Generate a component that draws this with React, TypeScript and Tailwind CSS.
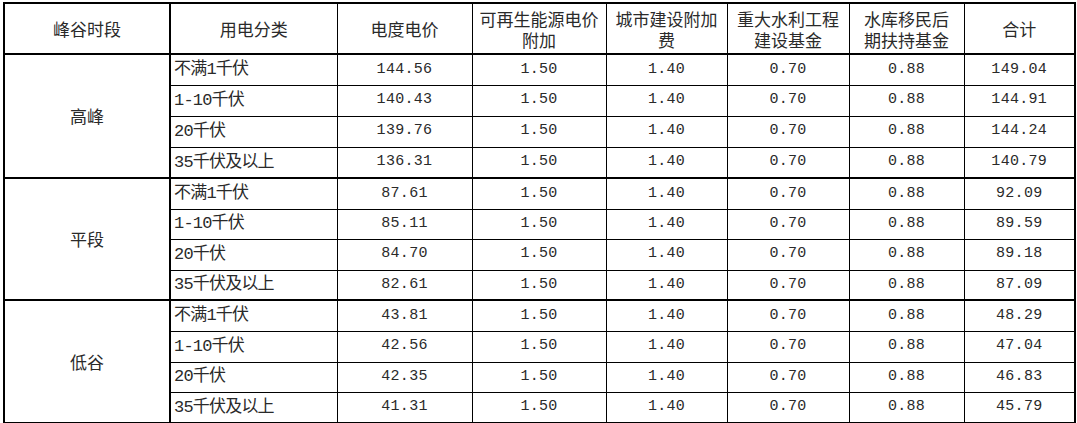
import React from "react";

// 峰谷分时电价表
const sections = [
  {
    period: "高峰",
    rows: [
      ["不满1千伏", "144.56", "149.04"],
      ["1-10千伏", "140.43", "144.91"],
      ["20千伏", "139.76", "144.24"],
      ["35千伏及以上", "136.31", "140.79"],
    ],
  },
  {
    period: "平段",
    rows: [
      ["不满1千伏", "87.61", "92.09"],
      ["1-10千伏", "85.11", "89.59"],
      ["20千伏", "84.70", "89.18"],
      ["35千伏及以上", "82.61", "87.09"],
    ],
  },
  {
    period: "低谷",
    rows: [
      ["不满1千伏", "43.81", "48.29"],
      ["1-10千伏", "42.56", "47.04"],
      ["20千伏", "42.35", "46.83"],
      ["35千伏及以上", "41.31", "45.79"],
    ],
  },
];

const rowHeights = [
  ["h-[31px]", "h-[31px]", "h-[31px]", "h-[31px]"],
  ["h-[31px]", "h-[30px]", "h-[31px]", "h-[30px]"],
  ["h-[31px]", "h-[31px]", "h-[30px]", "h-[31px]"],
];

// header lines, broken where the original breaks them
const headers: string[][] = [
  ["峰谷时段"],
  ["用电分类"],
  ["电度电价"],
  ["可再生能源电价", "附加"],
  ["城市建设附加", "费"],
  ["重大水利工程", "建设基金"],
  ["水库移民后", "期扶持基金"],
  ["合计"],
];

const cjk = "font-['Noto_Sans_CJK_SC',sans-serif] text-[17px]";
const num =
  "font-['Liberation_Mono','Noto_Sans_CJK_SC',monospace] text-[15px] tracking-[0.3px] text-center";

const App: React.FC = () => {
  return (
    <div className="w-[1077px] h-[423px] bg-white pt-[2px] pl-[3px] text-[#2a2a2a] overflow-hidden">
      <table className="table-fixed border-collapse border-2 border-black w-[1071px]">
        <colgroup>
          <col className="w-[166px]" />
          <col className="w-[167px]" />
          <col className="w-[135px]" />
          <col className="w-[134px]" />
          <col className="w-[121px]" />
          <col className="w-[122px]" />
          <col className="w-[115px]" />
          <col className="w-[111px]" />
        </colgroup>
        <thead>
          <tr className="h-[51px]">
            {headers.map((lines, i) => (
              <th
                key={lines.join("")}
                className={`${cjk} font-normal leading-[21px] text-center align-middle whitespace-nowrap px-0 border border-black border-b-2 ${
                  i === 0 ? "border-r-2" : ""
                }`}
              >
                {lines.map((l) => (
                  <div key={l}>{l}</div>
                ))}
              </th>
            ))}
          </tr>
        </thead>
        <tbody>
          {sections.map((s, si) =>
            s.rows.map(([cat, base, total], ri) => {
              const last = ri === s.rows.length - 1;
              const bottom = last ? "border-b-2" : "";
              return (
                <tr key={s.period + cat} className={rowHeights[si][ri]}>
                  {ri === 0 && (
                    <td
                      rowSpan={4}
                      className={`${cjk} text-center align-middle border border-black border-r-2 border-b-2`}
                    >
                      {s.period}
                    </td>
                  )}
                  <td
                    className={`font-['Liberation_Mono','Noto_Sans_CJK_SC',monospace] text-[17px] tracking-[-0.8px] pl-[3px] align-middle border border-black ${bottom}`}
                  >
                    {cat}
                  </td>
                  <td className={`${num} border border-black ${bottom}`}>{base}</td>
                  <td className={`${num} border border-black ${bottom}`}>1.50</td>
                  <td className={`${num} border border-black ${bottom}`}>1.40</td>
                  <td className={`${num} border border-black ${bottom}`}>0.70</td>
                  <td className={`${num} border border-black ${bottom}`}>0.88</td>
                  <td className={`${num} border border-black ${bottom}`}>{total}</td>
                </tr>
              );
            })
          )}
        </tbody>
      </table>
    </div>
  );
};

export default App;
